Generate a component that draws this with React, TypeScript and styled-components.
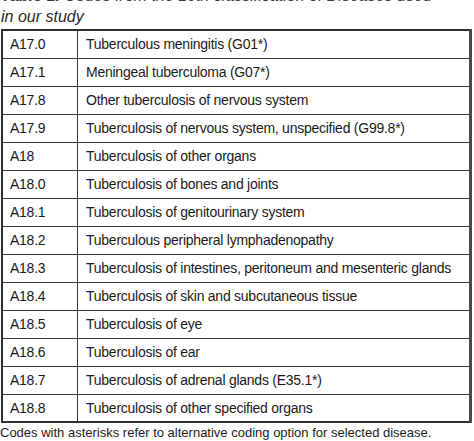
import React from "react";
import styled, { createGlobalStyle } from "styled-components";

const Global = createGlobalStyle`
  html, body { margin: 0; padding: 0; background: #ffffff; }
  body { font-family: "Liberation Sans", Arial, sans-serif; color: #1c1c1c; }
`;

const Page = styled.div`
  width: 474px;
  height: 441px;
  overflow: hidden;
  display: flex;
  flex-direction: column;
`;

const Caption = styled.div`
  padding-left: 1px;
  font-style: italic;
  font-size: 16px;
  line-height: 18px;
  color: #2a2a2a;
  white-space: nowrap;
`;

const CaptionLead = styled.div`
  margin-top: -13px;
  margin-bottom: 3px;
  color: #3a3a3a;
`;

const CaptionLine = styled.div``;

const Table = styled.table`
  margin: 3px 0 0 1px;
  width: 471px;
  border-collapse: collapse;
  border-top: 2px solid #2e2e2e;
  border-left: 2px solid #2e2e2e;
  border-right: 3px solid #4a4a4a;
  border-bottom: 2px solid #2e2e2e;
  font-size: 14px;
  letter-spacing: -0.25px;
  color: #1a1a1a;
`;

const Row = styled.tr`
  height: 28px;
  border-bottom: 1px solid #3a3a3a;
`;

const Cell = styled.td<{ $code?: boolean }>`
  padding: 0 0 0 ${(p) => (p.$code ? "7px" : "8px")};
  width: ${(p) => (p.$code ? "67px" : "auto")};
  border-right: ${(p) => (p.$code ? "1px solid #3a3a3a" : "none")};
  vertical-align: middle;
  white-space: nowrap;
  line-height: 16px;
`;

const Footnote = styled.div`
  margin-top: 2px;
  font-size: 13px;
  line-height: 15px;
  color: #1c1c1c;
`;

const rows: [string, string][] = [
  ["A17.0", "Tuberculous meningitis (G01*)"],
  ["A17.1", "Meningeal tuberculoma (G07*)"],
  ["A17.8", "Other tuberculosis of nervous system"],
  ["A17.9", "Tuberculosis of nervous system, unspecified (G99.8*)"],
  ["A18", "Tuberculosis of other organs"],
  ["A18.0", "Tuberculosis of bones and joints"],
  ["A18.1", "Tuberculosis of genitourinary system"],
  ["A18.2", "Tuberculous peripheral lymphadenopathy"],
  ["A18.3", "Tuberculosis of intestines, peritoneum and mesenteric glands"],
  ["A18.4", "Tuberculosis of skin and subcutaneous tissue"],
  ["A18.5", "Tuberculosis of eye"],
  ["A18.6", "Tuberculosis of ear"],
  ["A18.7", "Tuberculosis of adrenal glands (E35.1*)"],
  ["A18.8", "Tuberculosis of other specified organs"],
];

export default function App() {
  return (
    <>
      <Global />
      <Page>
        <Caption>
          <CaptionLead>
            <b>Table 1.</b> Codes from the 10th classification of Diseases used
          </CaptionLead>
          <CaptionLine>in our study</CaptionLine>
        </Caption>
        <Table>
          <tbody>
            {rows.map(([code, desc]) => (
              <Row key={code}>
                <Cell $code>{code}</Cell>
                <Cell>{desc}</Cell>
              </Row>
            ))}
          </tbody>
        </Table>
        <Footnote>
          Codes with asterisks refer to alternative coding option for selected disease.
        </Footnote>
      </Page>
    </>
  );
}
